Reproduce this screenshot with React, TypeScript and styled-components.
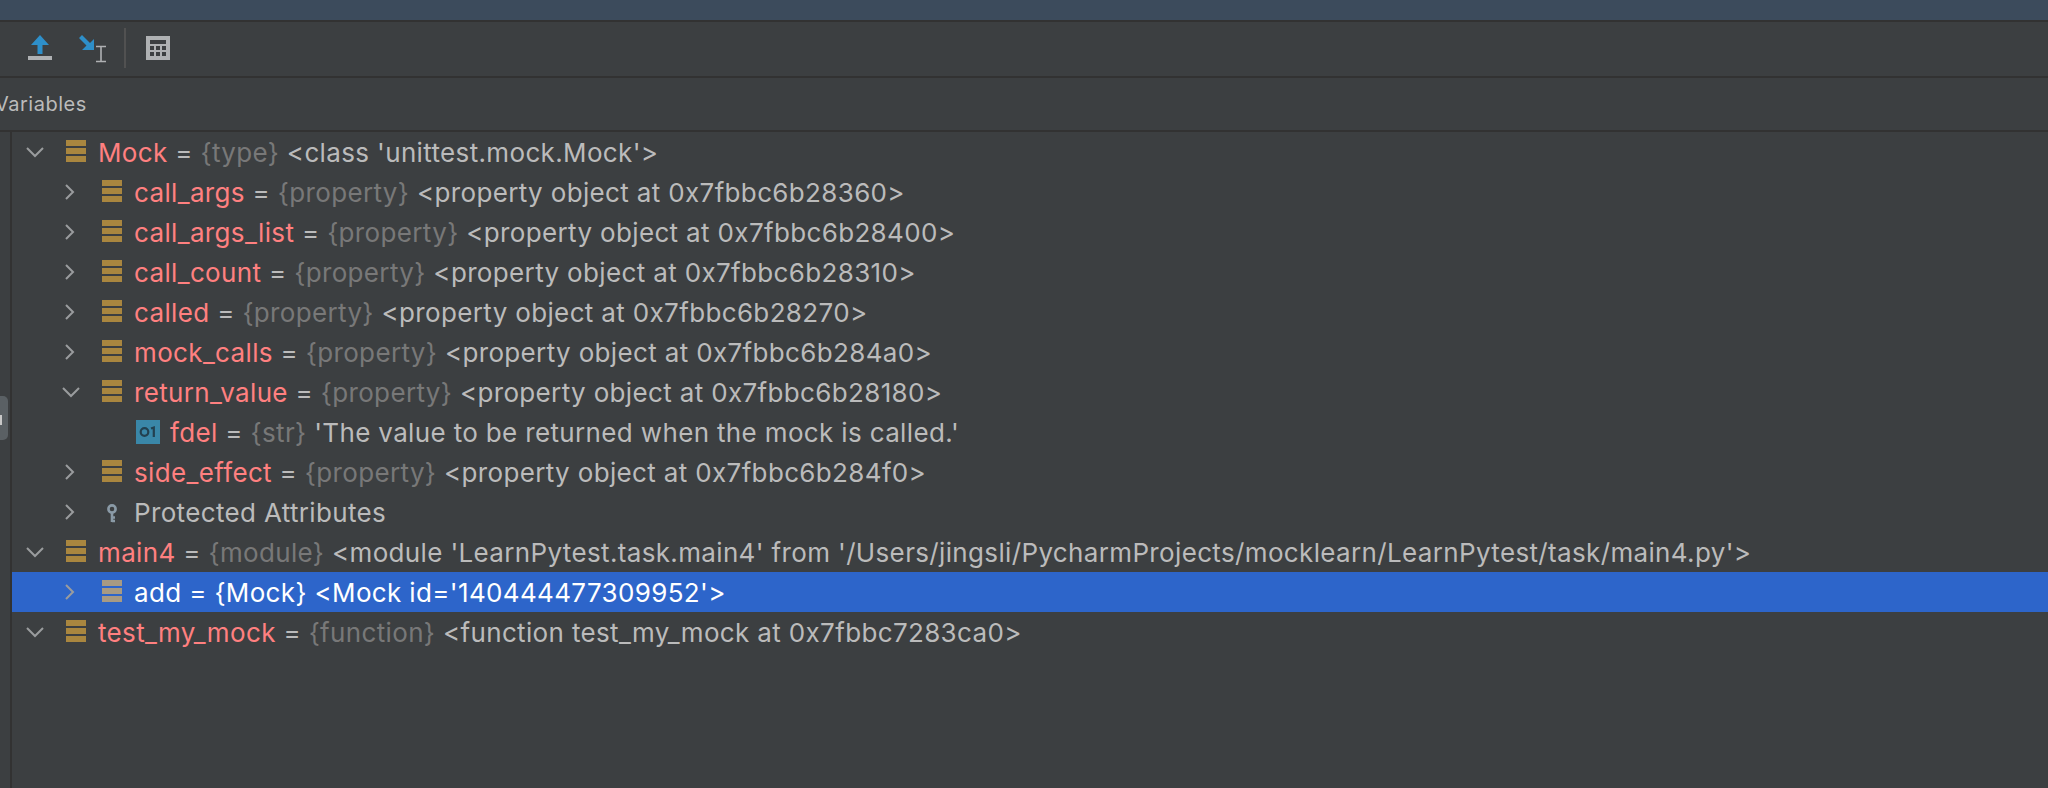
import styled, { createGlobalStyle } from "styled-components";

const GlobalStyle = createGlobalStyle`
    html, body {
        margin: 0;
        padding: 0;
        background: #3c3f41;
    }
`;

const Page = styled.div`
    width: 2048px;
    height: 788px;
    overflow: hidden;
    display: flex;
    flex-direction: column;
    background: #3c3f41;
    font-family: Inter, "Liberation Sans", sans-serif;
    color: #bbbbbb;
`;

const TitleBar = styled.div`
    height: 20px;
    flex: none;
    background: #3c4b5c;
    border-bottom: 2px solid #323232;
`;

const Toolbar = styled.div`
    height: 52px;
    flex: none;
    display: flex;
    align-items: center;
    padding: 0 0 2px 28px;
    border-bottom: 2px solid #323232;
`;

const ToolButton = styled.div<{ $w: number }>`
    width: ${(p) => p.$w}px;
    height: 40px;
    flex: none;
    display: flex;
    align-items: center;
`;

const ToolDivider = styled.div`
    width: 2px;
    height: 40px;
    margin: 0 20px 0 0;
    background: #515151;
`;

const Header = styled.div`
    height: 52px;
    flex: none;
    display: flex;
    align-items: center;
    border-bottom: 2px solid #323232;
    overflow: hidden;
`;

const HeaderLabel = styled.span`
    margin-left: -5px;
    font-size: 20px;
    letter-spacing: 0.5px;
    color: #bbbbbb;
`;

const Body = styled.div`
    flex: 1;
    display: flex;
    min-height: 0;
`;

const Gutter = styled.div`
    width: 10px;
    flex: none;
    position: relative;
    border-right: 2px solid #323232;
`;

const GutterTab = styled.div`
    position: absolute;
    left: 0;
    top: 264px;
    width: 8px;
    height: 44px;
    background: #5a6064;
    border-radius: 0 5px 5px 0;

    &::after {
        content: "";
        position: absolute;
        left: 0;
        top: 19px;
        width: 2px;
        height: 10px;
        background: #c8c8c8;
    }
`;

const Tree = styled.div`
    flex: 1;
    min-width: 0;
`;

const Row = styled.div<{ $depth: number; $selected?: boolean }>`
    height: 40px;
    display: flex;
    align-items: center;
    padding-left: ${(p) => 14 + p.$depth * 36}px;
    font-size: 26px;
    letter-spacing: 0.35px;
    background: ${(p) => (p.$selected ? "#2d65ca" : "transparent")};
    color: ${(p) => (p.$selected ? "#ffffff" : "#bbbbbb")};
`;

const Arrow = styled.svg`
    width: 18px;
    height: 18px;
    flex: none;
    margin-right: 20px;
`;

const ArrowSpace = styled.div`
    width: 38px;
    flex: none;
`;

const IconSlot = styled.svg`
    width: 24px;
    height: 24px;
    flex: none;
    margin-right: 10px;
`;

const Label = styled.span`
    white-space: pre;
`;

const Name = styled.span<{ $plain?: boolean }>`
    color: ${(p) => (p.$plain ? "inherit" : "#ff8080")};
`;

const Kind = styled.span<{ $plain?: boolean }>`
    color: ${(p) => (p.$plain ? "inherit" : "#787878")};
`;

function Chevron({ open }: { open: boolean }) {
    return (
        <Arrow viewBox="0 0 18 18">
            <path
                d={open ? "M1 5l8 8 8-8" : "M4 2l7 7-7 7"}
                fill="none"
                stroke="#9a9c9e"
                strokeWidth="2"
            />
        </Arrow>
    );
}

function FieldIcon({ selected }: { selected?: boolean }) {
    const c = selected ? "#a79a83" : "#a9863f";
    return (
        <IconSlot viewBox="0 0 24 24">
            <rect x="2" y="0" width="20" height="6" fill={c} />
            <rect x="2" y="8" width="20" height="6" fill={c} />
            <rect x="2" y="16" width="20" height="6" fill={c} />
        </IconSlot>
    );
}

function StrIcon() {
    return (
        <IconSlot viewBox="0 0 24 24">
            <rect x="0" y="0" width="24" height="24" fill="#3a87a8" />
            <circle cx="8.5" cy="12" r="3.8" fill="none" stroke="#23404f" strokeWidth="2.2" />
            <path d="M15 8.5l2.8-1V17" fill="none" stroke="#23404f" strokeWidth="2.2" />
        </IconSlot>
    );
}

function KeyIcon() {
    return (
        <IconSlot viewBox="0 0 24 24">
            <circle cx="12" cy="9" r="3.6" fill="none" stroke="#8a9aa6" strokeWidth="2.6" />
            <path d="M12 12v10M12 17.5h3M12 21h3" fill="none" stroke="#8a9aa6" strokeWidth="2.6" />
        </IconSlot>
    );
}

type Item = {
    depth: number;
    open?: boolean;
    leaf?: boolean;
    icon: "field" | "str" | "key";
    name: string;
    kind?: string;
    value?: string;
    plain?: boolean;
    selected?: boolean;
};

const items: Item[] = [
    { depth: 0, open: true, icon: "field", name: "Mock", kind: "{type}", value: "<class 'unittest.mock.Mock'>" },
    { depth: 1, icon: "field", name: "call_args", kind: "{property}", value: "<property object at 0x7fbbc6b28360>" },
    { depth: 1, icon: "field", name: "call_args_list", kind: "{property}", value: "<property object at 0x7fbbc6b28400>" },
    { depth: 1, icon: "field", name: "call_count", kind: "{property}", value: "<property object at 0x7fbbc6b28310>" },
    { depth: 1, icon: "field", name: "called", kind: "{property}", value: "<property object at 0x7fbbc6b28270>" },
    { depth: 1, icon: "field", name: "mock_calls", kind: "{property}", value: "<property object at 0x7fbbc6b284a0>" },
    { depth: 1, open: true, icon: "field", name: "return_value", kind: "{property}", value: "<property object at 0x7fbbc6b28180>" },
    { depth: 2, leaf: true, icon: "str", name: "fdel", kind: "{str}", value: "'The value to be returned when the mock is called.'" },
    { depth: 1, icon: "field", name: "side_effect", kind: "{property}", value: "<property object at 0x7fbbc6b284f0>" },
    { depth: 1, icon: "key", name: "Protected Attributes", plain: true },
    { depth: 0, open: true, icon: "field", name: "main4", kind: "{module}", value: "<module 'LearnPytest.task.main4' from '/Users/jingsli/PycharmProjects/mocklearn/LearnPytest/task/main4.py'>" },
    { depth: 1, icon: "field", name: "add", kind: "{Mock}", value: "<Mock id='140444477309952'>", plain: true, selected: true },
    { depth: 0, open: true, icon: "field", name: "test_my_mock", kind: "{function}", value: "<function test_my_mock at 0x7fbbc7283ca0>" },
];

export default function App() {
    return (
        <Page>
            <GlobalStyle />
            <TitleBar />
            <Toolbar>
                <ToolButton $w={50}>
                    <svg width="24" height="26" viewBox="0 0 24 26">
                        <path d="M12 0l9 10h-6.500v9h-5v-9H3z" fill="#2e8fc9" />
                        <rect y="21" width="24" height="4" fill="#afb1b3" />
                    </svg>
                </ToolButton>
                <ToolButton $w={46}>
                    <svg width="30" height="30" viewBox="0 0 30 30">
                        <path d="M1 5l3-3 8 8 4-4v11H4l4.500-4.500z" fill="#2e8fc9" />
                        <path d="M18 13.500h10M18 28.500h10M23 13.500v15" fill="none" stroke="#afb1b3" strokeWidth="1.6" />
                    </svg>
                </ToolButton>
                <ToolDivider />
                <ToolButton $w={30}>
                    <svg width="24" height="24" viewBox="0 0 24 24">
                        <path
                            fillRule="evenodd"
                            d="M0 0h24v24H0zM4 4v4h16V4zM4 10v4h4v-4zM10 10v4h4v-4zM16 10v4h4v-4zM4 16v4h4v-4zM10 16v4h4v-4zM16 16v4h4v-4z"
                            fill="#afb1b3"
                        />
                    </svg>
                </ToolButton>
            </Toolbar>
            <Header>
                <HeaderLabel>Variables</HeaderLabel>
            </Header>
            <Body>
                <Gutter>
                    <GutterTab />
                </Gutter>
                <Tree>
                    {items.map((item) => (
                        <Row key={item.name} $depth={item.depth} $selected={item.selected}>
                            {item.leaf ? <ArrowSpace /> : <Chevron open={!!item.open} />}
                            {item.icon === "field" && <FieldIcon selected={item.selected} />}
                            {item.icon === "str" && <StrIcon />}
                            {item.icon === "key" && <KeyIcon />}
                            <Label>
                                <Name $plain={item.plain}>{item.name}</Name>
                                {item.kind && (
                                    <>
                                        {" = "}
                                        <Kind $plain={item.selected}>{item.kind}</Kind>
                                        {" "}
                                        {item.value}
                                    </>
                                )}
                            </Label>
                        </Row>
                    ))}
                </Tree>
            </Body>
        </Page>
    );
}
